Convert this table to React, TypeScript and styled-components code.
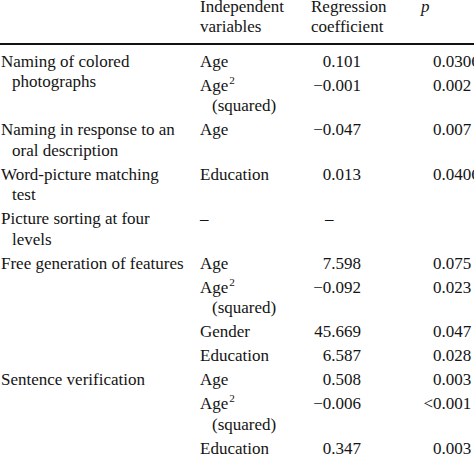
import React from 'react';
import styled, { createGlobalStyle } from 'styled-components';

const GlobalStyle = createGlobalStyle`
  html, body {
    margin: 0;
    padding: 0;
    background: #ffffff;
    overflow: hidden;
  }
  body {
    font-family: "Liberation Serif", "Times New Roman", serif;
    color: #141414;
  }
`;

const Table = styled.table`
  width: 520px;
  margin-top: -3px;
  border-collapse: separate;
  border-spacing: 0;
  table-layout: fixed;
  font-size: 17px;
  line-height: 20.5px;
`;

const HeadCell = styled.th<{ $italic?: boolean }>`
  text-align: left;
  font-weight: normal;
  font-style: ${p => (p.$italic ? 'italic' : 'normal')};
  vertical-align: top;
  line-height: 20px;
  padding: 0 0 5.5px 0;
  border-bottom: 2px solid #111;
`;

const Row = styled.tr`
  &:first-child td {
    padding-top: 7px;
  }
`;

const Cell = styled.td`
  vertical-align: top;
  padding: 1.75px 0;
`;

const LabelCell = styled(Cell)`
  padding-left: 12px;
  padding-right: 15.5px;
  text-indent: -11px;
`;

const VarCell = styled(Cell)`
  padding-left: 12px;
  padding-right: 22px;
  text-indent: -12px;
`;

const CoefCell = styled(Cell)<{ $empty?: boolean }>`
  text-align: ${p => (p.$empty ? 'left' : 'right')};
  padding-left: ${p => (p.$empty ? '14px' : '0')};
  padding-right: ${p => (p.$empty ? '0' : '60px')};
`;

const PCell = styled(Cell)`
  padding-left: 12px;
  white-space: nowrap;
`;

const Less = styled.span`
  margin-left: -0.564em;
`;

const Sup = styled.sup`
  font-size: 0.66em;
  line-height: 0;
  vertical-align: 0.6em;
  margin-left: 1px;
`;

type Entry = { v: React.ReactNode; c: string; p: string };
type Group = { label: string; entries: Entry[] };

const age2 = (
  <>
    Age<Sup>2</Sup> (squared)
  </>
);

const groups: Group[] = [
  {
    label: 'Naming of colored photographs',
    entries: [
      { v: 'Age', c: '0.101', p: '0.0306' },
      { v: age2, c: '\u22120.001', p: '0.002' },
    ],
  },
  {
    label: 'Naming in response to an oral description',
    entries: [{ v: 'Age', c: '\u22120.047', p: '0.007' }],
  },
  {
    label: 'Word-picture matching test',
    entries: [{ v: 'Education', c: '0.013', p: '0.0406' }],
  },
  {
    label: 'Picture sorting at four levels',
    entries: [{ v: '\u2013', c: '\u2013', p: '' }],
  },
  {
    label: 'Free generation of features',
    entries: [
      { v: 'Age', c: '7.598', p: '0.075' },
      { v: age2, c: '\u22120.092', p: '0.023' },
      { v: 'Gender', c: '45.669', p: '0.047' },
      { v: 'Education', c: '6.587', p: '0.028' },
    ],
  },
  {
    label: 'Sentence verification',
    entries: [
      { v: 'Age', c: '0.508', p: '0.003' },
      { v: age2, c: '\u22120.006', p: '<0.001' },
      { v: 'Education', c: '0.347', p: '0.003' },
    ],
  },
];

function PValue({ value }: { value: string }) {
  if (value.startsWith('<')) {
    return (
      <>
        <Less>&lt;</Less>
        {value.slice(1)}
      </>
    );
  }
  return <>{value}</>;
}

export default function App() {
  return (
    <>
      <GlobalStyle />
      <Table>
        <colgroup>
          <col style={{ width: 200 }} />
          <col style={{ width: 111 }} />
          <col style={{ width: 110 }} />
          <col style={{ width: 99 }} />
        </colgroup>
        <thead>
          <tr>
            <HeadCell />
            <HeadCell>Independent variables</HeadCell>
            <HeadCell>Regression coefficient</HeadCell>
            <HeadCell $italic>p</HeadCell>
          </tr>
        </thead>
        <tbody>
          {groups.map((g, gi) =>
            g.entries.map((e, ei) => (
              <Row key={`${gi}-${ei}`}>
                {ei === 0 && <LabelCell rowSpan={g.entries.length}>{g.label}</LabelCell>}
                <VarCell>{e.v}</VarCell>
                <CoefCell $empty={e.c === '\u2013'}>{e.c}</CoefCell>
                <PCell>
                  <PValue value={e.p} />
                </PCell>
              </Row>
            ))
          )}
        </tbody>
      </Table>
    </>
  );
}
